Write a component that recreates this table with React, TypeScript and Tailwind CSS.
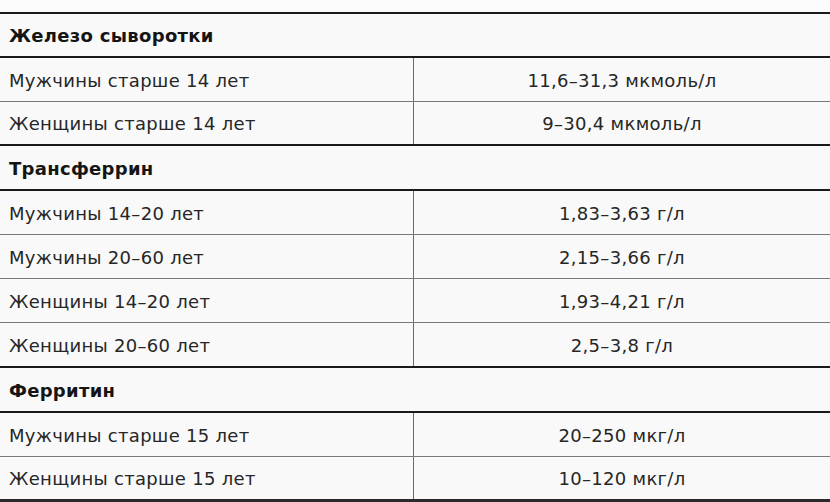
import React from "react";

type Row =
  | { kind: "head"; label: string; h: string; border: string }
  | { kind: "data"; label: string; value: string; h: string; border: string };

const rows: Row[] = [
  { kind: "head", label: "Железо сыворотки", h: "h-[44px]", border: "border-b-2 border-[#1a1a1a]" },
  { kind: "data", label: "Мужчины старше 14 лет", value: "11,6–31,3 мкмоль/л", h: "h-[44px]", border: "border-b border-[#7a7a7a]" },
  { kind: "data", label: "Женщины старше 14 лет", value: "9–30,4 мкмоль/л", h: "h-[44px]", border: "border-b-2 border-[#1a1a1a]" },
  { kind: "head", label: "Трансферрин", h: "h-[45px]", border: "border-b-2 border-[#1a1a1a]" },
  { kind: "data", label: "Мужчины 14–20 лет", value: "1,83–3,63 г/л", h: "h-[44px]", border: "border-b border-[#7a7a7a]" },
  { kind: "data", label: "Мужчины 20–60 лет", value: "2,15–3,66 г/л", h: "h-[44px]", border: "border-b border-[#7a7a7a]" },
  { kind: "data", label: "Женщины 14–20 лет", value: "1,93–4,21 г/л", h: "h-[44px]", border: "border-b border-[#7a7a7a]" },
  { kind: "data", label: "Женщины 20–60 лет", value: "2,5–3,8 г/л", h: "h-[45px]", border: "border-b-2 border-[#1a1a1a]" },
  { kind: "head", label: "Ферритин", h: "h-[45px]", border: "border-b-2 border-[#1a1a1a]" },
  { kind: "data", label: "Мужчины старше 15 лет", value: "20–250 мкг/л", h: "h-[44px]", border: "border-b border-[#7a7a7a]" },
  { kind: "data", label: "Женщины старше 15 лет", value: "10–120 мкг/л", h: "h-[45px]", border: "border-b-[3px] border-[#2a2a2a]" },
];

export default function App() {
  return (
    <div
      className="w-[830px] h-[502px] overflow-hidden bg-[#fbfbfb] text-[#1e1e1e]"
      style={{ fontFamily: '"DejaVu Sans", "Noto Sans", sans-serif' }}
    >
      <div className="h-[12px] bg-[#fcfcfc]" />
      <div className="flex flex-col border-t-2 border-[#1a1a1a] bg-[#f9f9f9]">
        {rows.map((r, i) =>
          r.kind === "head" ? (
            <div key={i} className={`flex items-center ${r.h} ${r.border} shrink-0 box-border pl-[9px]`}>
              <span className="text-[18px] font-bold tracking-[0.3px] text-[#151515] pt-[1px]">{r.label}</span>
            </div>
          ) : (
            <div key={i} className={`flex ${r.h} ${r.border} shrink-0 box-border`}>
              <div className="w-[414px] shrink-0 flex items-center pl-[9px] border-r border-[#6a6a6a]">
                <span className="text-[18px] tracking-[0.3px] text-[#262626] pt-[1px]">{r.label}</span>
              </div>
              <div className="flex-1 flex items-center justify-center">
                <span className="text-[18px] tracking-[0.3px] text-[#262626] pt-[1px]">{r.value}</span>
              </div>
            </div>
          )
        )}
      </div>
    </div>
  );
}
